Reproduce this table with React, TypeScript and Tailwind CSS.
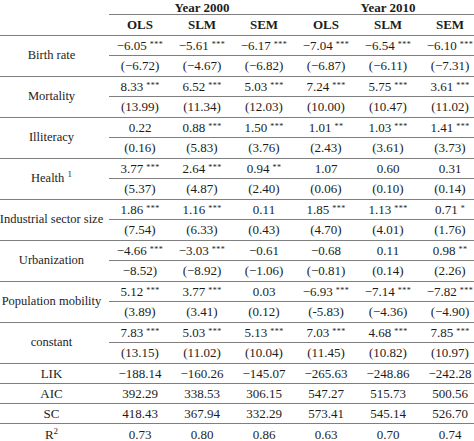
import React from "react";

type Row = { label: React.ReactNode; coef: string[]; t: string[] };

const rows: Row[] = [
  {
    label: "Birth rate",
    coef: ["−6.05 ***", "−5.61 ***", "−6.17 ***", "−7.04 ***", "−6.54 ***", "−6.10 ***"],
    t: ["(−6.72)", "(−4.67)", "(−6.82)", "(−6.87)", "(−6.11)", "(−7.31)"],
  },
  {
    label: "Mortality",
    coef: ["8.33 ***", "6.52 ***", "5.03 ***", "7.24 ***", "5.75 ***", "3.61 ***"],
    t: ["(13.99)", "(11.34)", "(12.03)", "(10.00)", "(10.47)", "(11.02)"],
  },
  {
    label: "Illiteracy",
    coef: ["0.22", "0.88 ***", "1.50 ***", "1.01 **", "1.03 ***", "1.41 ***"],
    t: ["(0.16)", "(5.83)", "(3.76)", "(2.43)", "(3.61)", "(3.73)"],
  },
  {
    label: (
      <>
        Health <sup className="text-[9px] -top-[5px]">1</sup>
      </>
    ),
    coef: ["3.77 ***", "2.64 ***", "0.94 **", "1.07", "0.60", "0.31"],
    t: ["(5.37)", "(4.87)", "(2.40)", "(0.06)", "(0.10)", "(0.14)"],
  },
  {
    label: "Industrial sector size",
    coef: ["1.86 ***", "1.16 ***", "0.11", "1.85 ***", "1.13 ***", "0.71 *"],
    t: ["(7.54)", "(6.33)", "(0.43)", "(4.70)", "(4.01)", "(1.76)"],
  },
  {
    label: "Urbanization",
    coef: ["−4.66 ***", "−3.03 ***", "−0.61", "−0.68", "0.11", "0.98 **"],
    t: ["−8.52)", "(−8.92)", "(−1.06)", "(−0.81)", "(0.14)", "(2.26)"],
  },
  {
    label: "Population mobility",
    coef: ["5.12 ***", "3.77 ***", "0.03", "−6.93 ***", "−7.14 ***", "−7.82 ***"],
    t: ["(3.89)", "(3.41)", "(0.12)", "(-5.83)", "(−4.36)", "(−4.90)"],
  },
  {
    label: "constant",
    coef: ["7.83 ***", "5.03 ***", "5.13 ***", "7.03 ***", "4.68 ***", "7.85 ***"],
    t: ["(13.15)", "(11.02)", "(10.04)", "(11.45)", "(10.82)", "(10.97)"],
  },
];

const stats: { label: React.ReactNode; vals: string[] }[] = [
  { label: "LIK", vals: ["−188.14", "−160.26", "−145.07", "−265.63", "−248.86", "−242.28"] },
  { label: "AIC", vals: ["392.29", "338.53", "306.15", "547.27", "515.73", "500.56"] },
  { label: "SC", vals: ["418.43", "367.94", "332.29", "573.41", "545.14", "526.70"] },
  {
    label: (
      <>
        R<sup className="text-[9px] -top-[5px]">2</sup>
      </>
    ),
    vals: ["0.73", "0.80", "0.86", "0.63", "0.70", "0.74"],
  },
];

const line = "border-b border-[#7f7f7f]";

// value with the significance stars set small and raised
const Val = ({ v }: { v: string }) => {
  const m = v.match(/^(\S+)(\s+)(\*+)$/);
  if (!m) return <span>{v}</span>;
  return (
    <span>
      {m[1]}
      <span className="text-[8px] relative -top-[3px] ml-[3px] tracking-[0.5px]">{m[3]}</span>
    </span>
  );
};

const Cell = ({ v }: { v: string }) => (
  <div className={`h-[20.5px] flex items-center justify-center whitespace-nowrap ${line}`}>
    <Val v={v} />
  </div>
);

export default function App() {
  return (
    <div className="w-[474px] h-[441px] overflow-hidden bg-white">
      <div
        className="grid grid-cols-[109px_repeat(6,62px)] w-[481px] text-[13px] text-[#1c1c1c] leading-none"
        style={{ fontFamily: '"Liberation Serif", "Times New Roman", serif' }}
      >
        {/* header */}
        <div className={`row-span-2 ${line}`} />
        <div className={`col-span-3 h-[15px] flex items-center justify-center font-bold ${line}`}>
          Year 2000
        </div>
        <div className={`col-span-3 h-[15px] flex items-center justify-center font-bold ${line}`}>
          Year 2010
        </div>
        {["OLS", "SLM", "SEM", "OLS", "SLM", "SEM"].map((h, i) => (
          <div key={i} className={`h-[20.5px] flex items-center justify-center font-bold ${line}`}>
            {h}
          </div>
        ))}

        {rows.map((r, ri) => (
          <React.Fragment key={ri}>
            <div
              className={`row-span-2 flex items-center justify-center whitespace-nowrap pr-[6px] text-[12.5px] ${line}`}
            >
              <span>{r.label}</span>
            </div>
            {r.coef.map((c, i) => (
              <Cell key={"c" + i} v={c} />
            ))}
            {r.t.map((c, i) => (
              <Cell key={"t" + i} v={c} />
            ))}
          </React.Fragment>
        ))}

        {stats.map((s, si) => (
          <React.Fragment key={si}>
            <div
              className={`h-[20.3px] flex items-center justify-center pr-[6px] ${si < stats.length - 1 ? line : ""}`}
            >
              <span>{s.label}</span>
            </div>
            {s.vals.map((v, i) => (
              <div
                key={i}
                className={`h-[20.3px] flex items-center justify-center ${si < stats.length - 1 ? line : ""}`}
              >
                {v}
              </div>
            ))}
          </React.Fragment>
        ))}
      </div>
    </div>
  );
}
